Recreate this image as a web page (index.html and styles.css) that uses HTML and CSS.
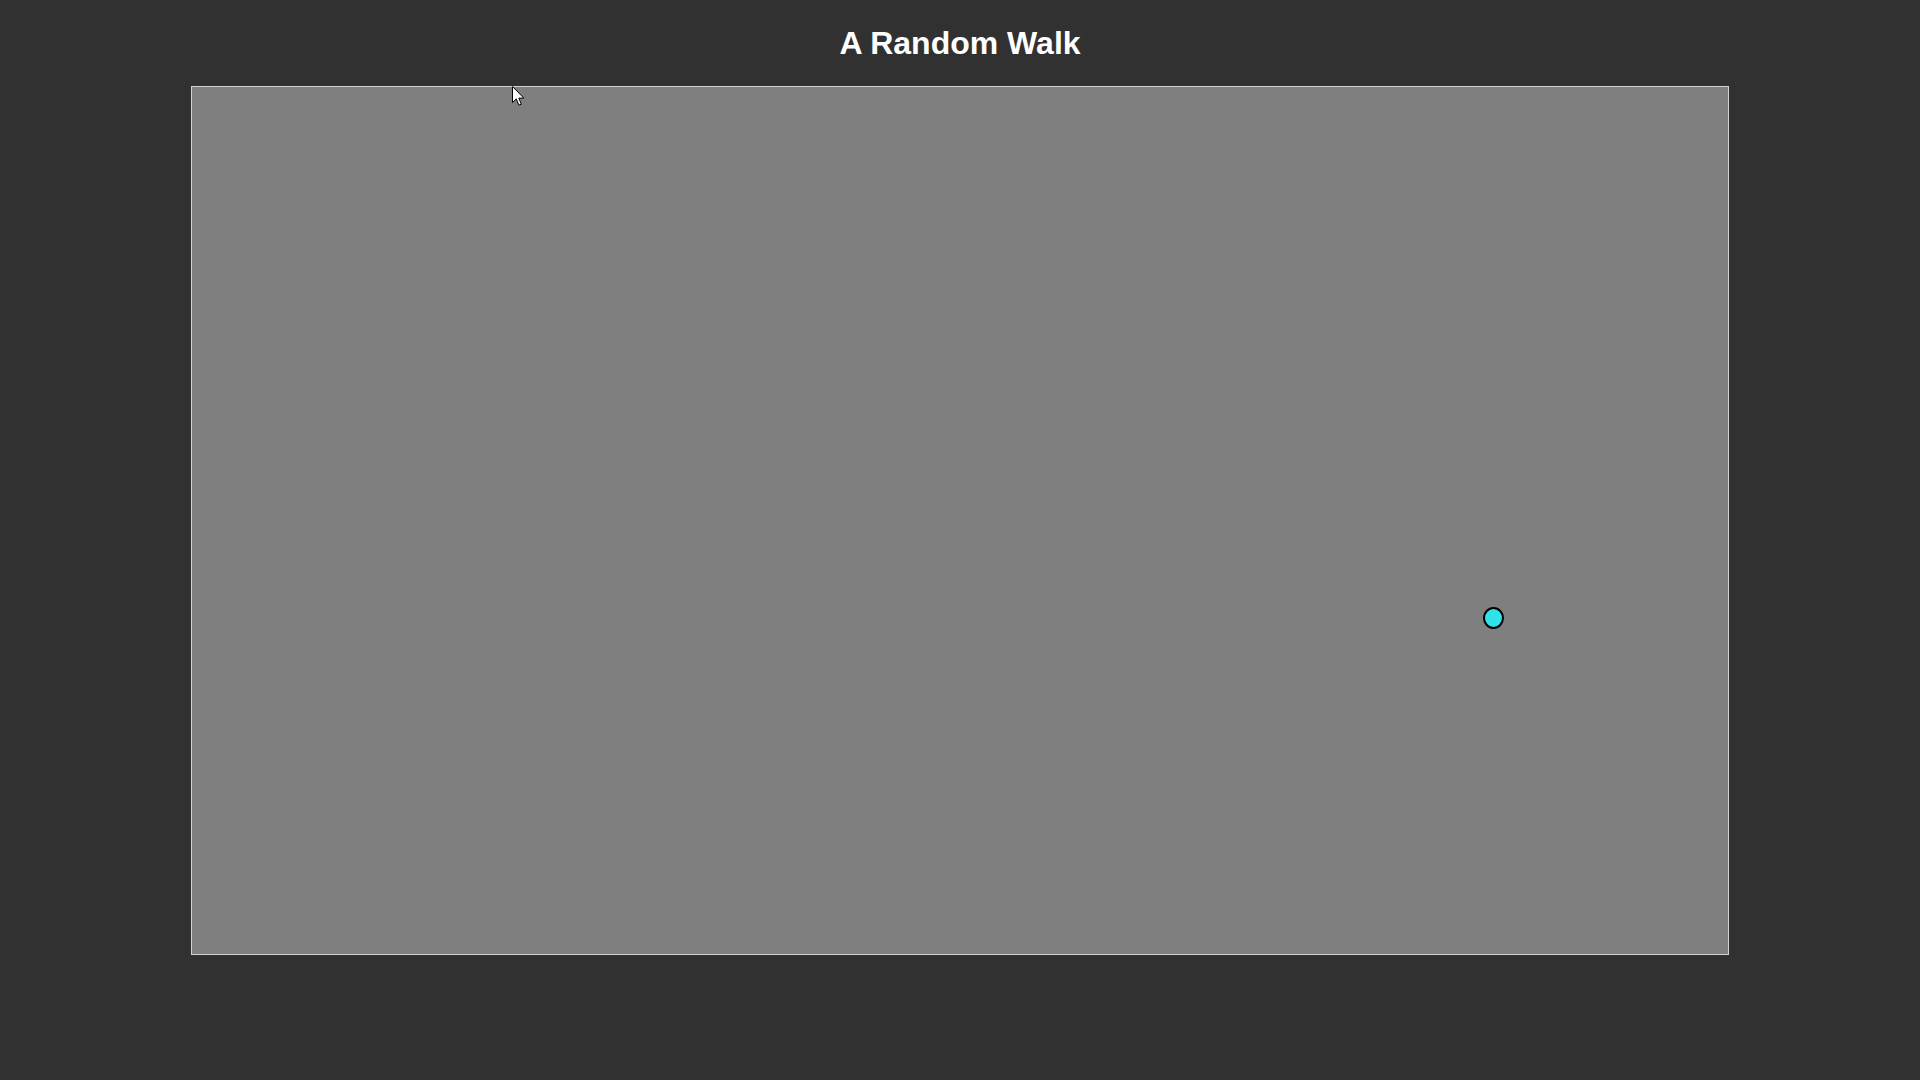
FILE: index.html
```html
<!DOCTYPE html>
<html lang="en">
<head>
<meta charset="utf-8">
<title>A Random Walk</title>
<link rel="stylesheet" href="styles.css">
</head>
<body>
<div class="page">
  <h1 class="title">A Random Walk</h1>
  <div class="board">
    <div class="walker"></div>
  </div>
</div>
<svg class="cursor" width="13" height="21" viewBox="0 0 13 21" xmlns="http://www.w3.org/2000/svg">
  <path d="M0.5 0.5 L0.5 16.5 L4.3 12.9 L6.9 19.2 L9.3 18.2 L6.8 12.1 L11.8 12.1 Z" fill="#ffffff" stroke="#000000" stroke-width="1"/>
</svg>
</body>
</html>
```
FILE: styles.css
```css
html, body {
  margin: 0;
  padding: 0;
  height: 100%;
}
body {
  background: #313131;
  font-family: "Liberation Sans", Arial, sans-serif;
  overflow: hidden;
}
.page {
  display: flex;
  flex-direction: column;
  align-items: center;
  padding-top: 25px;
}
.title {
  margin: 0 0 25px 0;
  font-size: 32px;
  font-weight: bold;
  line-height: 36px;
  color: #ffffff;
}
.board {
  position: relative;
  width: 1536px;
  height: 867px;
  background: #7f7f7f;
  border: 1px solid #d2d2d2;
}
.walker {
  position: absolute;
  left: 1291px;
  top: 520px;
  width: 17px;
  height: 18px;
  border: 2px solid #000000;
  border-radius: 50%;
  background: #2fe3ea;
}
.cursor {
  position: absolute;
  left: 512px;
  top: 86px;
}
```
